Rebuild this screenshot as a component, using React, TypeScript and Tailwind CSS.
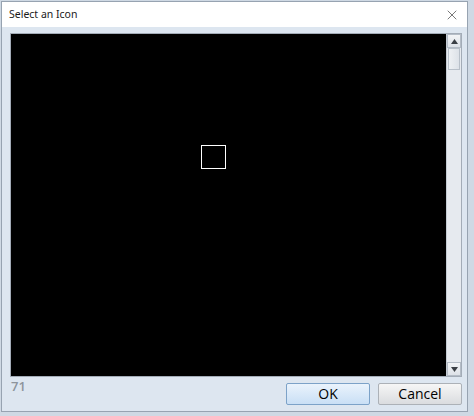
import { X } from 'lucide-react';

function ScrollArrow({ up }: { up: boolean }) {
  return (
    <div className="h-[14px] w-full border border-[#b4bcc6] bg-gradient-to-b from-[#f2f4f6] to-[#dde2e8] flex items-center justify-center">
      <svg width="7" height="5" viewBox="0 0 7 5">
        {up ? <polygon points="3.5,0 7,5 0,5" fill="#3a3f45" /> : <polygon points="0,0 7,0 3.5,5" fill="#3a3f45" />}
      </svg>
    </div>
  );
}

export default function App() {
  return (
    <div
      className="w-[474px] h-[416px] bg-[#cfd9e4] overflow-hidden"
      style={{ fontFamily: '"Open Sans", "Noto Sans", sans-serif' }}
    >
      <div className="ml-[1px] mt-[1px] w-[467px] h-[411px] border border-[#97a3b1] flex flex-col bg-[#dde6f0]">
        <div className="h-[25px] bg-white flex items-center justify-between pl-[7px] pr-[7px] shrink-0">
          <span className="text-[10.5px] text-[#1a1a1a] leading-none" style={{ fontFamily: '"Noto Sans", sans-serif' }}>
            Select an Icon
          </span>
          <X size={16} strokeWidth={1} className="text-[#333]" />
        </div>
        <div className="flex-1 flex flex-col pl-[8px] pr-[5px] pt-[6px]">
          <div className="h-[344px] flex border border-[#a3acb7]">
            <div className="flex-1 bg-black flex items-start justify-center pt-[111px] pr-[30px]">
              <div className="w-[25px] h-[24px] border-[1.5px] border-white" />
            </div>
            <div className="w-[15px] bg-[#e6eaef] flex flex-col border-l border-[#c4cbd3]">
              <ScrollArrow up />
              <div className="h-[22px] mx-[1px] border border-[#b8c0c9] bg-gradient-to-r from-[#eef1f4] to-[#dde2e8]" />
              <div className="flex-1" />
              <ScrollArrow up={false} />
            </div>
          </div>
          <div className="flex items-start justify-between pt-[3px]">
            <span className="text-[13px] leading-none font-semibold text-[#8d949c] pl-[1px]">71</span>
            <div className="flex gap-[8px] pt-[3px]">
              <button className="w-[84px] h-[22px] border border-[#7ca2c8] rounded-[2px] bg-gradient-to-b from-[#eaf3fc] to-[#c9dff5] text-[14px] text-black leading-none">
                OK
              </button>
              <button className="w-[84px] h-[22px] border border-[#acb1b7] rounded-[2px] bg-gradient-to-b from-[#f6f6f6] to-[#dadcdf] text-[14px] text-black leading-none">
                Cancel
              </button>
            </div>
          </div>
        </div>
      </div>
    </div>
  );
}
